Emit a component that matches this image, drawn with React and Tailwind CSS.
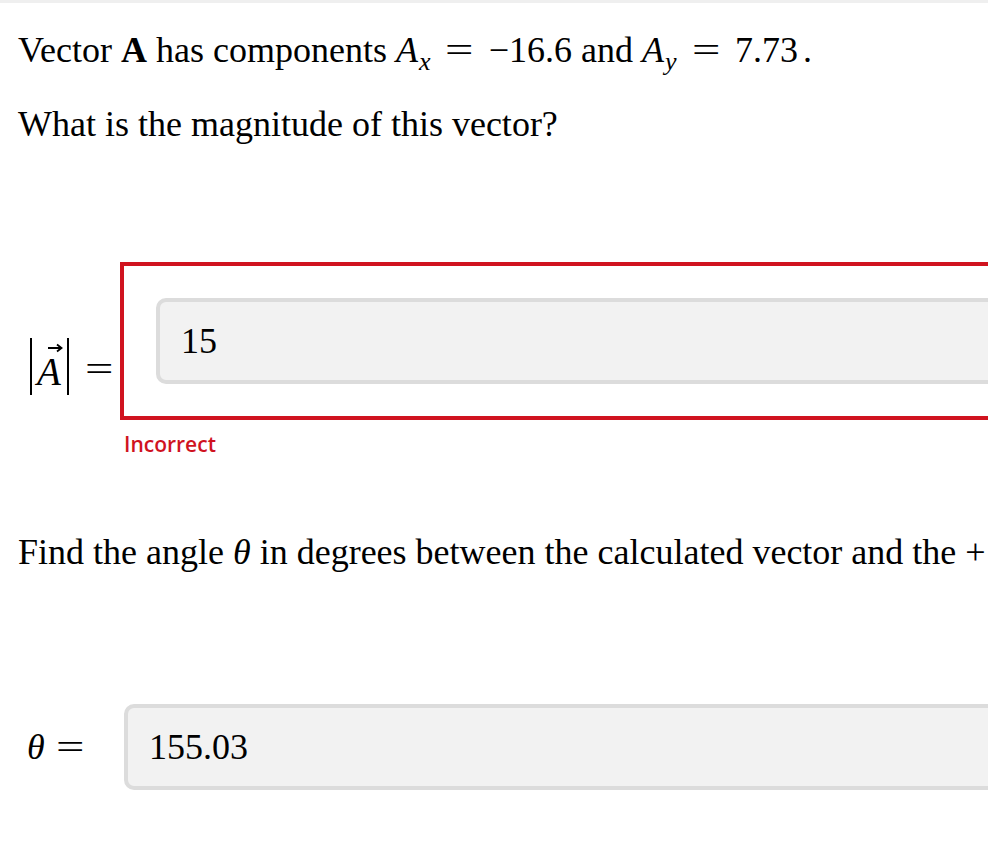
import React from "react";

const serif = { fontFamily: '"Liberation Serif", "Times New Roman", serif' };

function Eq({ className = "" }) {
  return <span className={`inline-block scale-x-[1.4] ${className}`}>=</span>;
}

function MathA({ sub }) {
  return (
    <span className="whitespace-nowrap">
      <span className="italic">A</span>
      <span className="relative top-[8px] ml-[1px] text-[26px] italic">{sub}</span>
    </span>
  );
}

function VectorA() {
  return (
    <div className="flex items-center text-[36px] leading-none text-black">
      <span className="h-[57px] w-[2px] shrink-0 bg-black" />
      <span className="relative ml-[5px] mr-[6px] pt-[10px] text-[39px] italic">
        A
        <svg className="absolute left-[10px] top-[1px]" width="16" height="10" viewBox="0 0 16 10">
          <path d="M1 5 H14 M10 1.5 L14.5 5 L10 8.5" fill="none" stroke="black" strokeWidth="1.8" />
        </svg>
      </span>
      <span className="h-[57px] w-[2px] shrink-0 bg-black" />
      <Eq className="ml-[20px] pt-[4px]" />
    </div>
  );
}

export default function App() {
  return (
    <div className="h-[866px] w-[988px] overflow-hidden bg-white text-black" style={serif}>
      <div className="h-[3px] w-full bg-[#efefef]" />

      <div className="pl-[18px]">
        <p className="mt-[27px] whitespace-nowrap text-[36px] leading-[40px]">
          Vector <span className="font-bold">A</span> has components{" "}
          <MathA sub="x" />
          <Eq className="mx-[19px]" />
          −16.6 and <MathA sub="y" />
          <Eq className="mx-[19px]" />
          7.73<span className="ml-[5px]">.</span>
        </p>

        <p className="mt-[30px] text-[36px] leading-[40px]">What is the magnitude of this vector?</p>

        <div className="mt-[118px] flex items-start">
          <div className="mt-[76px] w-[102px] shrink-0 pl-[12px]">
            <VectorA />
          </div>
          <div className="shrink-0">
            <div className="w-[940px] border-4 border-[#d0131f] p-8">
              <div className="flex h-[86px] items-start rounded-[10px] border-4 border-[#dcdcdc] bg-[#f2f2f2] pl-[21px] pt-[19px] text-[36px] leading-[40px]">
                15
              </div>
            </div>
            <p
              className="ml-[4px] mt-[10px] text-[21px] font-semibold leading-[28px] text-[#d0131f]"
              style={{ fontFamily: '"Open Sans", sans-serif' }}
            >
              Incorrect
            </p>
          </div>
        </div>

        <p className="mt-[74px] whitespace-nowrap text-[36px] leading-[40px]">
          Find the angle <span className="italic">θ</span> in degrees between the calculated vector and the +
        </p>

        <div className="mt-[132px] flex items-center">
          <div className="w-[106px] shrink-0 pl-[9px] text-[36px] leading-none">
            <span className="italic">θ</span>
            <Eq className="ml-[15px]" />
          </div>
          <div className="flex h-[86px] w-[900px] shrink-0 items-start rounded-[10px] border-4 border-[#dcdcdc] bg-[#f2f2f2] pl-[21px] pt-[19px] text-[36px] leading-[40px]">
            155.03
          </div>
        </div>
      </div>
    </div>
  );
}
